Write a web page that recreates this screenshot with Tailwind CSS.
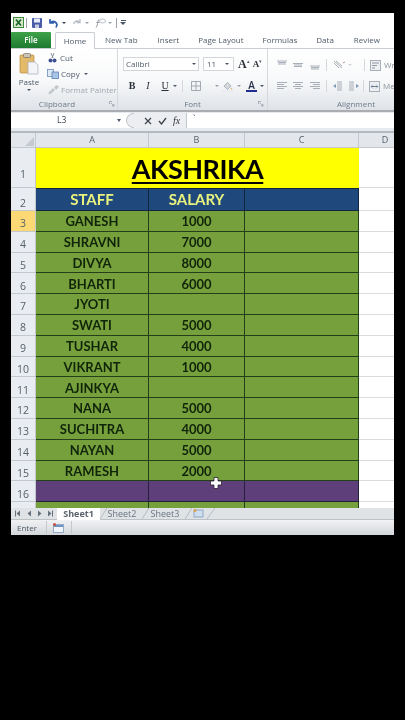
<!DOCTYPE html>
<html lang="en">
<head>
  <meta charset="UTF-8">
  <meta name="viewport" content="width=device-width, initial-scale=1">
  <title>AKSHRIKA - Excel</title>
  <script src="https://cdn.jsdelivr.net/npm/@tailwindcss/browser@4"></script>
</head>
<body class="bg-black w-[405px] h-[720px] overflow-hidden font-['Open_Sans',sans-serif]">
  <div class="relative ml-[11px] mt-[13px] w-[383px] h-[522px] bg-[#e6e9ed] flex flex-col overflow-hidden blur-[0.4px]">

    <!-- Quick access bar -->
    <div class="h-[19px] bg-white flex items-center pl-[2px] shrink-0">
      <svg class="w-[11px] h-[11px]" viewBox="0 0 11 11"><rect x=".5" y=".5" width="10" height="10" fill="#d6e8cc" stroke="#3c8a3c"/><path d="M3 2.500l5 6M8 2.500l-5 6" stroke="#1d6b2a" stroke-width="1.800"/></svg>
      <div class="w-px h-[10px] bg-gray-400 ml-[2px]"></div>
      <svg class="w-[10px] h-[10px] ml-[5px]" viewBox="0 0 10 10"><rect width="10" height="10" rx="1" fill="#4a5ba8"/><rect x="2" y=".5" width="6" height="4" fill="#e8ecf6"/><rect x="3" y="6.500" width="4" height="3.500" fill="#c6cbe0"/></svg>
      <svg class="w-[9px] h-[10px] ml-[7px]" viewBox="0 0 9 10"><path d="M1 1v4h4M1.500 5C3 2.500 7.500 3 8 7l-1 2.500" fill="none" stroke="#2f5fa8" stroke-width="1.700"/></svg>
      <div class="ml-[4px] border-x-[2px] border-t-[2px] border-x-transparent border-t-gray-700"></div>
      <svg class="w-[9px] h-[9px] ml-[6px]" viewBox="0 0 9 9"><path d="M8 1v3.500H4.500M8 4.500C6.500 2 2.500 2.500 1.500 6" fill="none" stroke="#b6bcc6" stroke-width="1.300"/></svg>
      <div class="ml-[4px] border-x-[2px] border-t-[2px] border-x-transparent border-t-gray-400"></div>
      <svg class="w-[12px] h-[10px] ml-[5px]" viewBox="0 0 12 10"><path d="M2 9.500C4 8 3 3 5 1.500M2.500 4.500h3" fill="none" stroke="#8a8f98" stroke-width=".9"/><ellipse cx="8.500" cy="3" rx="3" ry="2" fill="none" stroke="#b6bcc6"/></svg>
      <div class="ml-[2px] border-x-[2px] border-t-[2px] border-x-transparent border-t-gray-400"></div>
      <div class="w-px h-[10px] bg-gray-400 ml-[4px]"></div>
      <div class="ml-[3px] flex flex-col items-center gap-[1px]"><div class="w-[5px] h-px bg-gray-600"></div><div class="border-x-[3px] border-t-[3px] border-x-transparent border-t-gray-600"></div></div>
    </div>

    <!-- Tabs -->
    <div class="h-[17px] bg-white flex items-end text-[8px] text-[#4d5a68] shrink-0 border-b border-[#c9ced4]">
      <div class="w-[40px] h-[16px] bg-gradient-to-b from-[#3fa34a] to-[#1d7a30] text-white font-semibold flex items-center justify-center rounded-t-[1px]">File</div>
      <div class="ml-[4px] w-[40px] h-[17px] -mb-px bg-white border border-b-0 border-[#c9ced4] rounded-t-[2px] flex items-center justify-center">Home</div>
      <div class="ml-[10px] h-[16px] flex items-center">New Tab</div>
      <div class="ml-[20px] h-[16px] flex items-center">Insert</div>
      <div class="ml-[19px] h-[16px] flex items-center">Page Layout</div>
      <div class="ml-[19px] h-[16px] flex items-center">Formulas</div>
      <div class="ml-[19px] h-[16px] flex items-center">Data</div>
      <div class="ml-[20px] h-[16px] flex items-center">Review</div>
    </div>

    <!-- Ribbon -->
    <div class="h-[63px] bg-gradient-to-b from-white via-[#f8f9fa] to-[#dfe3e8] flex text-[8px] text-[#4d5a68] border-b-2 border-[#a9adb2] shrink-0">

      <!-- Clipboard -->
      <div class="w-[107px] shrink-0 border-r border-[#d5d9de] flex flex-col">
        <div class="flex h-[50px]">
          <div class="w-[36px] flex flex-col items-center pt-[4px]">
            <svg class="w-[20px] h-[22px]" viewBox="0 0 20 22"><rect x="1" y="2" width="14" height="18" rx="1" fill="#e3b96a" stroke="#b88c3e" stroke-width=".7"/><rect x="4.500" y=".5" width="7" height="4" rx="1" fill="#c9c4b4" stroke="#77705c" stroke-width=".7"/><path d="M9 9h7l3 3v9H9z" fill="#f2f4f7" stroke="#a6adb8" stroke-width=".7"/></svg>
            <span class="mt-[2px] leading-[10px]">Paste</span>
            <div class="mt-[2px] border-x-[2px] border-t-[2px] border-x-transparent border-t-gray-600"></div>
          </div>
          <div class="flex flex-col pt-[1px] gap-[1px]">
            <div class="h-[15px] flex items-center">
              <svg class="w-[9px] h-[10px] ml-[1px]" viewBox="0 0 9 10"><path d="M3 0l2 5M6 0L4 5" stroke="#7d8794" stroke-width=".9"/><circle cx="2.500" cy="7.500" r="2" fill="#3f4f8f"/><circle cx="6.500" cy="7.500" r="2" fill="#3f4f8f"/></svg>
              <span class="ml-[3px]">Cut</span>
            </div>
            <div class="h-[15px] flex items-center">
              <svg class="w-[12px] h-[10px]" viewBox="0 0 12 10"><rect x=".5" y=".5" width="6" height="7" fill="#dfe8f5" stroke="#6f8fbc" stroke-width=".8"/><rect x="5" y="3" width="6.500" height="6.500" fill="#a8c4e6" stroke="#5f7fb0" stroke-width=".8"/></svg>
              <span class="ml-[2px]">Copy</span>
              <div class="ml-[4px] border-x-[2px] border-t-[2px] border-x-transparent border-t-gray-600"></div>
            </div>
            <div class="h-[15px] flex items-center text-[#a3a9b0]">
              <svg class="w-[12px] h-[10px]" viewBox="0 0 12 10"><path d="M1 8l5-5 2 2-5 4.500zM7 2l3-2 2 2-3 3z" fill="#c4c8cd"/></svg>
              <span class="ml-[2px]">Format Painter</span>
            </div>
          </div>
        </div>
        <div class="flex-1 flex items-center justify-center pr-[14px] relative text-[#6f7a86]">Clipboard<svg class="absolute right-[2px] top-[3px] w-[6px] h-[6px]" viewBox="0 0 6 6"><path d="M.5 3V.5H3M2 2l3 3M5 3v2H3" fill="none" stroke="#8a929c" stroke-width=".7"/></svg></div>
      </div>

      <!-- Font -->
      <div class="w-[150px] shrink-0 border-r border-[#d5d9de] flex flex-col">
        <div class="h-[50px] flex flex-col pl-[5px] pt-[8px]">
          <div class="flex items-center h-[14px]">
            <div class="w-[76px] h-[14px] bg-white border border-[#d3d7dc] flex items-center justify-between px-[2px]"><span>Calibri</span><div class="border-x-[2px] border-t-[2px] border-x-transparent border-t-gray-600"></div></div>
            <div class="ml-[4px] w-[31px] h-[14px] bg-white border border-[#d3d7dc] flex items-center justify-between pl-[3px] pr-[4px]"><span>11</span><div class="border-x-[2px] border-t-[2px] border-x-transparent border-t-gray-600"></div></div>
            <span class="ml-[4px] font-['Liberation_Serif',serif] font-bold text-[12px] leading-none text-[#2b3038]">A</span><span class="-mt-[6px] text-[5px] leading-none">▴</span>
            <span class="ml-[3px] font-['Liberation_Serif',serif] font-bold text-[9px] leading-none text-[#2b3038]">A</span><span class="-mt-[5px] text-[5px] leading-none">▾</span>
          </div>
          <div class="flex items-center h-[14px] mt-[8px] pl-[3px] text-[#2b3038]">
            <span class="w-[12px] text-center font-['Liberation_Serif',serif] font-bold text-[10px] leading-none">B</span>
            <span class="ml-[4px] w-[12px] text-center font-['Liberation_Serif',serif] italic text-[10px] leading-none">I</span>
            <span class="ml-[5px] w-[12px] text-center font-['Liberation_Serif',serif] underline text-[10px] leading-none">U</span>
            <div class="ml-[2px] border-x-[2px] border-t-[2px] border-x-transparent border-t-gray-600"></div>
            <div class="ml-[5px] w-px h-[12px] bg-[#d5d9de]"></div>
            <svg class="ml-[8px] w-[10px] h-[10px]" viewBox="0 0 10 10"><path d="M.5.5h9v9h-9zM5 .5v9M.5 5h9" fill="none" stroke="#9aa1aa" stroke-width=".9"/></svg>
            <div class="ml-[14px] border-x-[2px] border-t-[2px] border-x-transparent border-t-gray-400"></div>
            <svg class="ml-[3px] w-[11px] h-[11px]" viewBox="0 0 11 11"><path d="M2 5l3.500-3.500L9 5l-3.500 3.500z" fill="#d5d9de" stroke="#9aa1aa" stroke-width=".7"/><path d="M9.500 6.500l1 2h-2z" fill="#d8b56a"/><rect y="9.500" width="11" height="1.500" fill="#e7eaee"/></svg>
            <div class="ml-[4px] border-x-[2px] border-t-[2px] border-x-transparent border-t-gray-400"></div>
            <span class="ml-[5px] w-[11px] h-[13px] flex flex-col items-center font-semibold text-[10px] leading-[10px] text-[#27324f]">A<span class="w-[11px] h-[2px] bg-[#1f2f8f]"></span></span>
            <div class="ml-[3px] border-x-[2px] border-t-[2px] border-x-transparent border-t-gray-600"></div>
          </div>
        </div>
        <div class="flex-1 flex items-center justify-center relative text-[#6f7a86]">Font<svg class="absolute right-[3px] top-[3px] w-[6px] h-[6px]" viewBox="0 0 6 6"><path d="M.5 3V.5H3M2 2l3 3M5 3v2H3" fill="none" stroke="#8a929c" stroke-width=".7"/></svg></div>
      </div>

      <!-- Alignment -->
      <div class="flex-1 flex flex-col">
        <div class="h-[50px] flex flex-col pt-[10px] pl-[9px]">
          <div class="flex items-center h-[12px]">
            <svg class="w-[43px] h-[10px]" viewBox="0 0 43 10"><path d="M0 1h10M1 2.500h8M1 4h8M16 3.500h10M17 5h8M17 6.500h8M33 6h10M34 7.500h8M34 9h8" stroke="#a8afb8"/></svg>
            <div class="ml-[6px] w-px h-[12px] bg-[#d5d9de]"></div>
            <svg class="ml-[6px] w-[13px] h-[10px]" viewBox="0 0 13 10"><path d="M1 1l8 7M3 1l6 5M1 3l5 5" stroke="#a3a9b0" stroke-width=".9"/><path d="M10 3l2-1" stroke="#b49a9a"/></svg>
            <div class="ml-[2px] border-x-[2px] border-t-[2px] border-x-transparent border-t-gray-300"></div>
            <div class="ml-[12px] w-px h-[12px] bg-[#d5d9de]"></div>
            <svg class="ml-[5px] w-[11px] h-[11px]" viewBox="0 0 11 11"><rect x=".5" y=".5" width="10" height="10" fill="#eef0f3" stroke="#a8afb8"/><path d="M2 3h7M2 5.500h5M2 8h3" stroke="#8f97a1"/></svg>
            <span class="ml-[3px] text-[#8a929c]">Wr</span>
          </div>
          <div class="flex items-center h-[12px] mt-[9px]">
            <svg class="w-[43px] h-[10px]" viewBox="0 0 43 10"><path d="M0 1.500h10M0 3.500h7M0 5.500h10M0 7.500h7M16 1.500h10M18 3.500h6M16 5.500h10M18 7.500h6M33 1.500h10M36 3.500h7M33 5.500h10M36 7.500h7" stroke="#a8afb8"/></svg>
            <div class="ml-[6px] w-px h-[12px] bg-[#d5d9de]"></div>
            <svg class="ml-[6px] w-[26px] h-[10px]" viewBox="0 0 26 10"><path d="M4 1h5M4 3h5M4 5h5M4 7h5M4 9h5M16 1h5M16 3h5M16 5h5M16 7h5M16 9h5" stroke="#a8afb8"/><path d="M0 5l3-2v4zM26 5l-3-2v4z" fill="#7f9abc"/></svg>
            <div class="ml-[4px] w-px h-[12px] bg-[#d5d9de]"></div>
            <svg class="ml-[5px] w-[11px] h-[11px]" viewBox="0 0 11 11"><rect x=".5" y=".5" width="10" height="10" fill="#eef0f3" stroke="#a8afb8"/><path d="M2 5.500h7" stroke="#6f7a86"/><path d="M4 3.500l-2 2 2 2M7 3.500l2 2-2 2" fill="none" stroke="#7f9abc" stroke-width=".7"/></svg>
            <span class="ml-[3px] text-[#8a929c]">Me</span>
          </div>
        </div>
        <div class="flex-1 flex items-center pl-[69px] text-[#6f7a86]">Alignment</div>
      </div>
    </div>

    <!-- Formula bar -->
    <div class="h-[15px] mt-px bg-white flex items-center text-[8.500px] text-[#3c4650] shrink-0">
      <div class="w-[115px] flex items-center justify-between pr-[5px] pl-[46px]"><span>L3</span><div class="border-x-[2.500px] border-t-[3px] border-x-transparent border-t-gray-600"></div></div>
      <div class="w-[8px] h-[15px] bg-[#eceef1] border border-r-0 border-[#c3c8ce] rounded-l-full"></div>
      <div class="w-[52px] h-[15px] bg-[#eceef1] flex items-center pl-[10px] gap-[6px] text-[#30363e]">
        <svg class="w-[8px] h-[8px]" viewBox="0 0 8 8"><path d="M1 1l6 6M7 1L1 7" stroke="#3d434b" stroke-width="1.200"/></svg>
        <svg class="w-[9px] h-[8px]" viewBox="0 0 9 8"><path d="M1 4l2.500 3L8 1" fill="none" stroke="#3d434b" stroke-width="1.300"/></svg>
        <span class="font-['Liberation_Serif',serif] italic text-[10px] leading-none">fx</span>
      </div>
      <div class="w-px h-[15px] bg-[#c3c8ce]"></div>
      <span class="ml-[6px] -mt-[3px]">`</span>
    </div>

    <div class="h-[5px] bg-[#e6e9ed] border-b-2 border-[#b4b9bf] shrink-0"></div>

    <!-- Sheet -->
    <div id="sheet" class="relative flex-1 overflow-hidden bg-white grid grid-cols-[25px_113px_96px_114px_52px] grid-rows-[15px_40px_23px_repeat(13,20.800px)_21px_8px] font-['Lato',sans-serif] font-bold text-[13px] text-[#10240a] text-center">
      <!-- column headers -->
      <div class="bg-[#e3e7eb] border-r border-b border-[#c3c8ce] flex items-end justify-end"><div class="w-0 h-0 border-l-[9px] border-b-[9px] border-l-transparent border-b-[#c5cad0] mr-[1px] mb-[1px]"></div></div>
      <div class="bg-[#e3e7eb] border-r border-b border-[#c3c8ce] flex items-center justify-center font-['Open_Sans',sans-serif] font-normal text-[9px] text-[#56606a]">A</div>
      <div class="bg-[#e3e7eb] border-r border-b border-[#c3c8ce] flex items-center justify-center font-['Open_Sans',sans-serif] font-normal text-[9px] text-[#56606a]">B</div>
      <div class="bg-[#e3e7eb] border-r border-b border-[#c3c8ce] flex items-center justify-center font-['Open_Sans',sans-serif] font-normal text-[9px] text-[#56606a]">C</div>
      <div class="bg-[#e3e7eb] border-b border-[#c3c8ce] flex items-center justify-center font-['Open_Sans',sans-serif] font-normal text-[9px] text-[#56606a]">D</div>

      <!-- row 1 -->
      <div class="bg-[#e9ecf0] border-r border-b border-[#c3c8ce] flex items-end justify-center pb-[8px] font-['Open_Sans',sans-serif] font-normal text-[10.500px] leading-none text-[#56606a]">1</div>
      <div class="col-span-3 bg-[#ffff00] flex items-center justify-center text-[27px] tracking-[-0.5px] leading-none text-black"><span class="underline decoration-2 underline-offset-[3px]">AKSHRIKA</span></div>
      <div class="border-b border-[#dcdcdc]"></div>

      <!-- row 2 -->
      <div class="bg-[#e9ecf0] border-r border-b border-[#c3c8ce] flex items-end justify-center pb-[2px] font-['Open_Sans',sans-serif] font-normal text-[10.500px] leading-none text-[#56606a]">2</div>
      <div class="bg-[#1f497d] border-y border-r border-[#12263f] flex items-center justify-center text-[15px] text-[#e9f27c]">STAFF</div>
      <div class="bg-[#1f497d] border-y border-r border-[#12263f] flex items-center justify-center text-[15px] text-[#e9f27c]">SALARY</div>
      <div class="bg-[#1f497d] border-y border-r border-[#12263f]"></div>
      <div class="border-b border-[#dcdcdc]"></div>

      <!-- rows 3 to 15 are added by the script below -->
    </div>

    <!-- Sheet tabs -->
    <div class="h-[12px] bg-[#dfe3e6] flex items-center text-[9px] text-[#6a7480] border-b border-[#bcc1c6] shrink-0">
      <svg class="w-[46px] h-[7px]" viewBox="0 0 46 7" fill="#66717c"><path d="M4 .5h1v6H4zM9 .5v6L5.500 3.500zM20 .5v6l-3.500-3zM27 .5v6l3.500-3zM37 .5v6l3.500-3zM41 .5h1v6h-1z"/></svg>
      <div class="w-[43px] h-[12px] bg-white font-bold text-[#5a636c] flex items-center justify-center">Sheet1</div>
      <svg class="w-[7px] h-[11px]" viewBox="0 0 7 11"><path d="M0 11L7 0" stroke="#aab0b6" stroke-width=".8"/></svg>
      <div class="w-[30px] flex items-center justify-center">Sheet2</div>
      <svg class="ml-[5px] w-[7px] h-[11px]" viewBox="0 0 7 11"><path d="M0 11L7 0" stroke="#aab0b6" stroke-width=".8"/></svg>
      <div class="ml-[1px] w-[30px] flex items-center justify-center">Sheet3</div>
      <svg class="ml-[5px] w-[7px] h-[11px]" viewBox="0 0 7 11"><path d="M0 11L7 0" stroke="#aab0b6" stroke-width=".8"/></svg>
      <svg class="ml-[1px] w-[11px] h-[9px]" viewBox="0 0 11 9"><rect x="1" y="1" width="9" height="7" fill="#cfdff0" stroke="#7f99b8" stroke-width=".8"/><circle cx="2" cy="1.500" r="1.500" fill="#d9a44c"/></svg>
      <svg class="ml-[3px] w-[8px] h-[11px]" viewBox="0 0 8 11"><path d="M0 11L8 0" stroke="#aab0b6" stroke-width=".8"/></svg>
    </div>

    <!-- Status bar -->
    <div class="h-[15px] bg-gradient-to-b from-[#f1f2f4] to-[#d3d6da] flex items-center text-[8px] text-[#4d5a68] shrink-0">
      <span class="ml-[6px]">Enter</span>
      <div class="ml-[9px] w-px h-[13px] bg-[#c3c8ce]"></div>
      <svg class="ml-[6px] w-[11px] h-[10px]" viewBox="0 0 11 10"><rect x=".5" y="1.500" width="10" height="8" fill="#f2f5f9" stroke="#7f99b8" stroke-width=".8"/><rect x="1" y="2" width="9" height="2" fill="#6f93c4"/><circle cx="1.500" cy="1.500" r="1.500" fill="#c8503c"/></svg>
      <div class="ml-[7px] w-px h-[13px] bg-[#c3c8ce]"></div>
    </div>
  </div>

  <script>
    // staff list, row numbers start at 3
    const rows = [
      ['GANESH', '1000'], ['SHRAVNI', '7000'], ['DIVYA', '8000'], ['BHARTI', '6000'],
      ['JYOTI', ''], ['SWATI', '5000'], ['TUSHAR', '4000'], ['VIKRANT', '1000'],
      ['AJINKYA', ''], ['NANA', '5000'], ['SUCHITRA', '4000'], ['NAYAN', '5000'], ['RAMESH', '2000']
    ];
    const head = "border-r border-b border-[#c3c8ce] flex items-end justify-center pb-[2px] font-['Open_Sans',sans-serif] font-normal text-[10.500px] leading-none text-[#56606a]";
    const green = 'bg-[#76a03c] border-b border-r border-[#24401a] flex items-center justify-center pt-[2px]';
    const purple = 'bg-[#5f3f79] border-b border-r border-[#24203a]';
    const grid = '<div class="border-b border-[#dcdcdc]"></div>';

    let html = '';
    rows.forEach((r, i) => {
      html += `<div class="${i === 0 ? 'bg-[#fcd974]' : 'bg-[#e9ecf0]'} ${head}">${i + 3}</div>`;
      html += `<div class="${green}">${r[0]}</div><div class="${green}">${r[1]}</div><div class="${green}"></div>${grid}`;
    });
    // row 16 is the purple one, row 17 is cut off by the tab bar
    html += `<div class="bg-[#e9ecf0] ${head}">16</div><div class="${purple}"></div><div class="${purple}"></div><div class="${purple}"></div>${grid}`;
    html += `<div class="bg-[#e9ecf0] border-r border-[#c3c8ce]"></div>`;
    html += `<div class="bg-[#76a03c] border-r border-[#24401a]"></div>`.repeat(3) + '<div></div>';
    // mouse cursor over B16
    html += `<svg class="absolute left-[199px] top-[344px] w-[12px] h-[12px]" viewBox="0 0 12 12"><path d="M4 .5h4v3.500h3.500v4H8v3.500H4V8H.5V4H4z" fill="#fff" stroke="#2a2036" stroke-width=".8"/></svg>`;
    document.getElementById('sheet').insertAdjacentHTML('beforeend', html);
  </script>
</body>
</html>
